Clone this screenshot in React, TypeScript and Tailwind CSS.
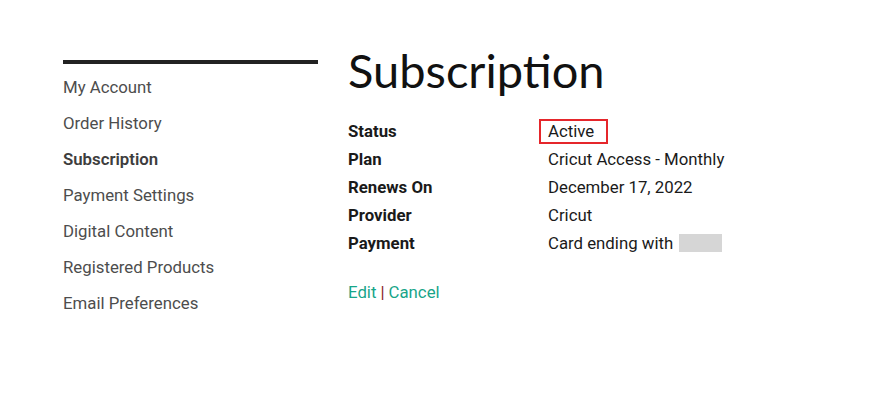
const nav = [
  { label: "My Account" },
  { label: "Order History" },
  { label: "Subscription", active: true },
  { label: "Payment Settings" },
  { label: "Digital Content" },
  { label: "Registered Products" },
  { label: "Email Preferences" },
];

const rows: { label: string; value: React.ReactNode }[] = [
  {
    label: "Status",
    value: (
      <span className="relative -top-px -ml-[9px] inline-block border-2 border-[#e5262b] py-px pl-[7px] pr-[12px] align-middle leading-[19px]">
        Active
      </span>
    ),
  },
  { label: "Plan", value: "Cricut Access - Monthly" },
  { label: "Renews On", value: "December 17, 2022" },
  { label: "Provider", value: "Cricut" },
  {
    label: "Payment",
    value: (
      <span className="inline-flex items-center">
        Card ending with
        <span className="ml-[6px] inline-block h-[18px] w-[43px] bg-[#d6d6d6]" />
      </span>
    ),
  },
];

export default function App() {
  return (
    <div className="min-h-[403px] w-full bg-white font-['Roboto',sans-serif]">
      <div className="flex pl-[63px] pt-[60px]">
        <aside className="w-[255px] shrink-0">
          <div className="h-1 bg-[#222]" />
          <ul className="mt-[11px] flex flex-col gap-[12px] text-[16.8px] leading-6 text-[#4d4d4d]">
            {nav.map((n) => (
              <li key={n.label} className={n.active ? "font-semibold text-[#3d3d3d]" : ""}>
                {n.label}
              </li>
            ))}
          </ul>
        </aside>
        <main className="ml-[30px] -mt-[20px]">
          <h1 className="font-['Lato',sans-serif] text-[47px] leading-[60px] text-[#111]">Subscription</h1>
          <dl className="mt-[17px] grid grid-cols-[200px_auto] text-[16.8px] leading-7 text-[#1a1a1a]">
            {rows.map((r) => (
              <div key={r.label} className="contents">
                <dt className="font-bold">{r.label}</dt>
                <dd>{r.value}</dd>
              </div>
            ))}
          </dl>
          <div className="mt-[23px] text-[16.8px] leading-6 text-[#17a589]">
            <a href="#">Edit</a>
            <span className="mx-[4px] text-[#8b1c1c]">|</span>
            <a href="#">Cancel</a>
          </div>
        </main>
      </div>
    </div>
  );
}
